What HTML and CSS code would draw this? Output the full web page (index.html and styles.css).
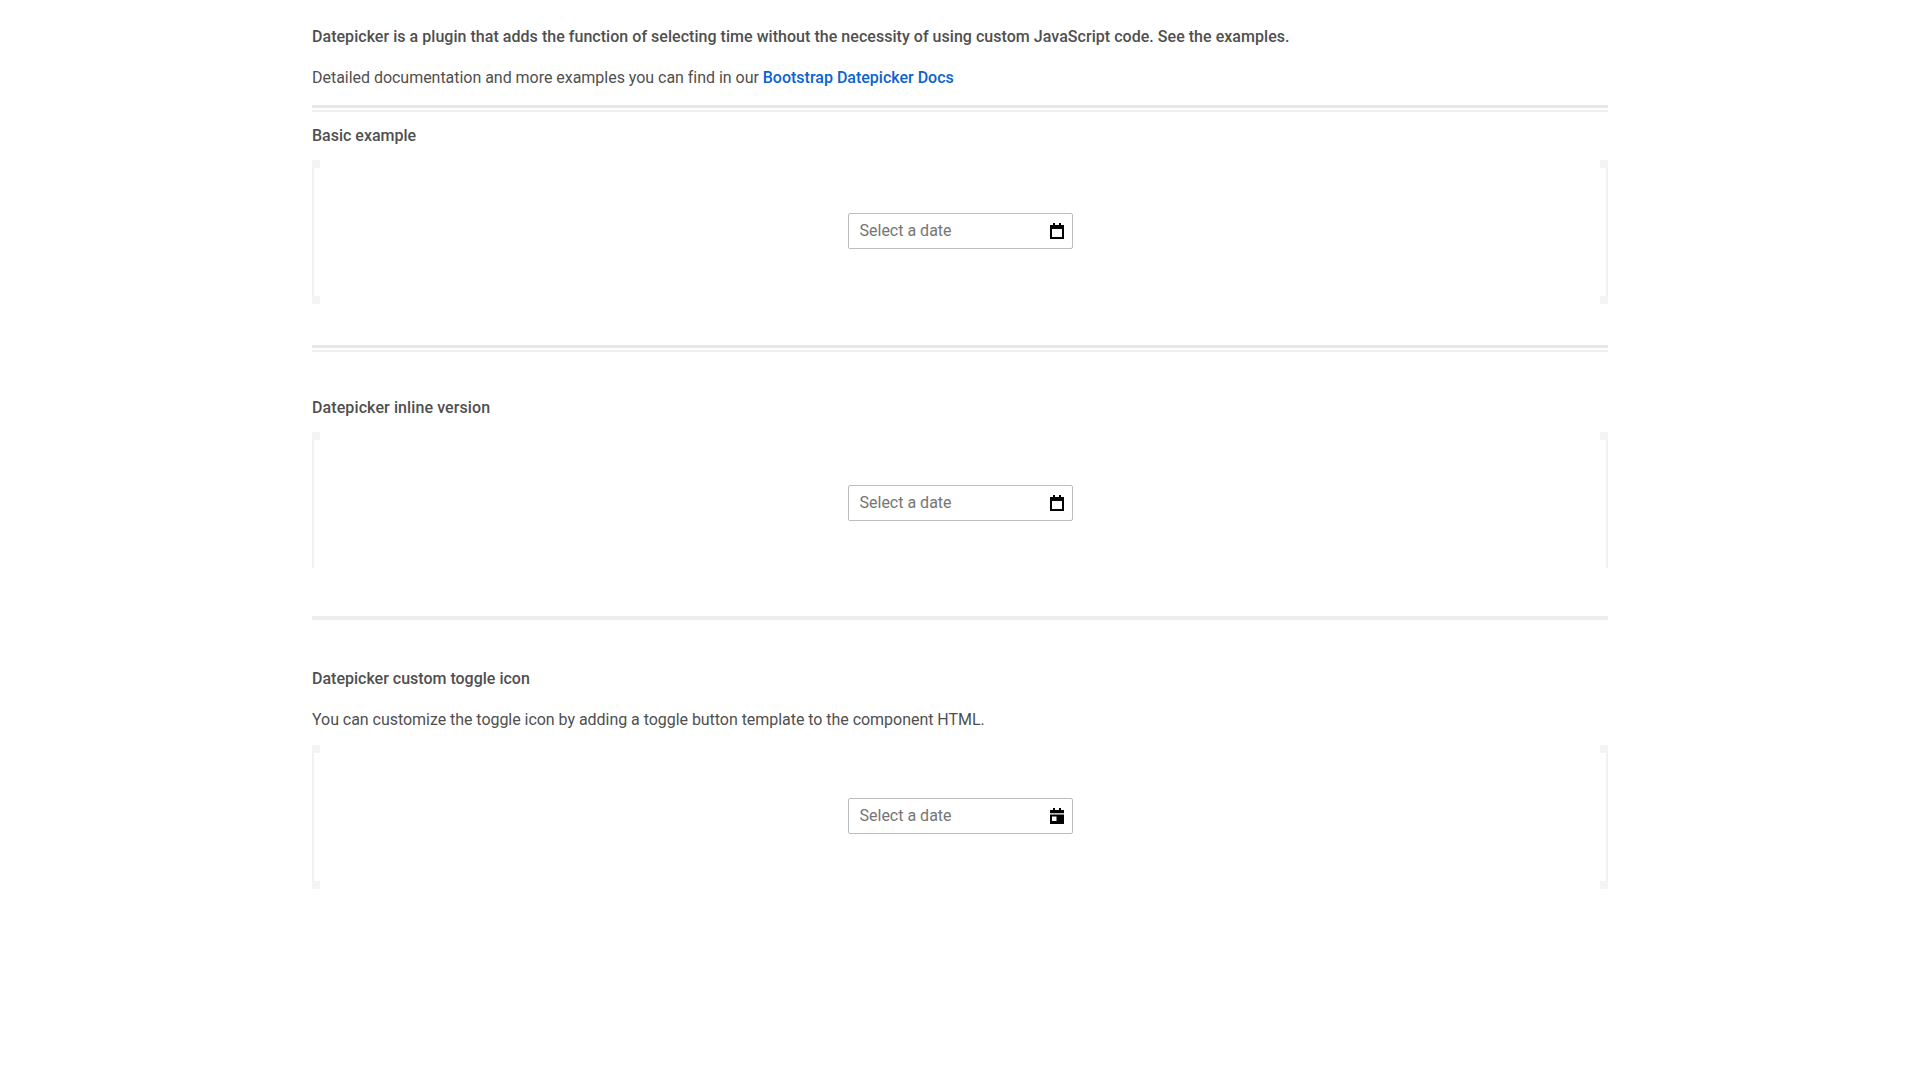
FILE: index.html
```html
<!DOCTYPE html>
<html lang="en">
<head>
<meta charset="utf-8">
<title>Datepicker</title>
<link rel="stylesheet" href="styles.css">
</head>
<body>
<main class="page">
  <p class="text strong intro">Datepicker is a plugin that adds the function of selecting time without the necessity of using custom JavaScript code. See the examples.</p>
  <p class="text docs">Detailed documentation and more examples you can find in our <a class="link" href="#">Bootstrap Datepicker Docs</a></p>
  <hr class="rule rule-first">
  <h2 class="text strong heading heading-first">Basic example</h2>
  <section class="demo">
    <div class="field">
      <span class="placeholder">Select a date</span>
      <svg class="icon" viewBox="0 0 14 16"><path fill-rule="evenodd" d="M3 0h2v2h4V0h2v2h3v14H0V2h3zM2 6v8h10V6z"/></svg>
    </div>
  </section>
  <hr class="rule rule-double rule-second">
  <h2 class="text strong heading heading-second">Datepicker inline version</h2>
  <section class="demo demo-open">
    <div class="field">
      <span class="placeholder">Select a date</span>
      <svg class="icon" viewBox="0 0 14 16"><path fill-rule="evenodd" d="M3 0h2v2h4V0h2v2h3v14H0V2h3zM2 6v8h10V6z"/></svg>
    </div>
  </section>
  <hr class="rule rule-single">
  <h2 class="text strong heading heading-third">Datepicker custom toggle icon</h2>
  <p class="text closing">You can customize the toggle icon by adding a toggle button template to the component HTML.</p>
  <section class="demo">
    <div class="field">
      <span class="placeholder">Select a date</span>
      <svg class="icon" viewBox="0 0 14 16"><path d="M3 0h2v2h4V0h2v2h3v3.200H0V2h3z"/><path fill-rule="evenodd" d="M0 6.500h14V16H0zM2 8.500v4.500h4.500V8.500z"/></svg>
    </div>
  </section>
</main>
</body>
</html>
```
FILE: styles.css
```css
html, body { margin: 0; padding: 0; background: #fff; }
body { font-family: Roboto, "Liberation Sans", sans-serif; font-size: 16px; line-height: 24px; color: #4f4f4f; height: 1080px; overflow: hidden; }
.page { width: 1296px; margin: 0 auto; padding-top: 25px; }
.text { margin: 0 0 16px; font-size: 16px; font-weight: 400; line-height: 24px; }
.strong { font-weight: 500; }
.intro { margin-bottom: 17px; letter-spacing: 0.036px; }
.docs { margin-bottom: 0; letter-spacing: -0.03px; }
.link { color: #0b63ce; font-weight: 500; text-decoration: none; letter-spacing: 0; }
.rule { box-sizing: border-box; margin: 0; border: 0; background: #fff; }
.rule-first, .rule-double { height: 7px; border-top: 3px solid #e8e8e8; border-bottom: 2px solid #f0f0f0; }
.rule-first { margin-top: 15px; }
.rule-second { margin-top: 41px; }
.rule-single { height: 4px; margin-top: 48px; background: #eeeeee; }
.heading { margin-bottom: 12px; }
.heading-first { margin-top: 12px; }
.heading-second { margin-top: 44px; letter-spacing: 0.1px; }
.heading-third { margin-top: 47px; margin-bottom: 17px; }
.closing { margin-bottom: 13px; letter-spacing: -0.04px; }
.demo { box-sizing: border-box; height: 144px; padding-top: 53px; display: flex; align-items: flex-start; justify-content: center;
  background-color: #fff;
  background-image:
    linear-gradient(#f4f4f4, #f4f4f4), linear-gradient(#f4f4f4, #f4f4f4),
    linear-gradient(#f4f4f4, #f4f4f4), linear-gradient(#f4f4f4, #f4f4f4),
    linear-gradient(#f1f1f1, #f1f1f1), linear-gradient(#f1f1f1, #f1f1f1);
  background-repeat: no-repeat;
  background-size: 8px 8px, 8px 8px, 8px 8px, 8px 8px, 2px 100%, 2px 100%;
  background-position: left top, right top, left bottom, right bottom, left top, right top;
}
.demo-open { height: 136px; background-size: 8px 8px, 8px 8px, 0 0, 0 0, 2px 100%, 2px 100%; }
.field { box-sizing: border-box; width: 225px; height: 36px; border: 1px solid #bdbdbd; border-radius: 2px; display: flex; align-items: center; justify-content: space-between; padding: 0 8px 0 11px; }
.placeholder { color: #757575; font-size: 16px; }
.icon { width: 14px; height: 16px; fill: #000; display: block; }
```
